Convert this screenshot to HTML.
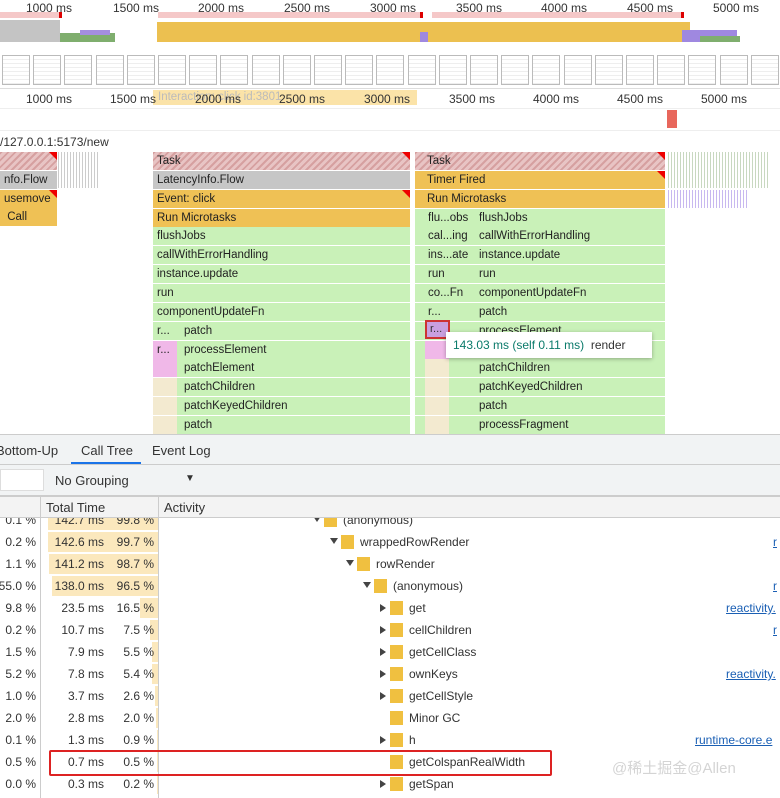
<!DOCTYPE html>
<html><head><meta charset="utf-8">
<style>
*{margin:0;padding:0;box-sizing:border-box}
body{width:780px;height:798px;overflow:hidden;background:#fff;font-family:"Liberation Sans",sans-serif;font-size:12px;color:#333;position:relative}
.a{position:absolute;white-space:nowrap}
.lab{font-size:12px;color:#333}
.fr{position:absolute;height:18px;line-height:18px;font-size:11.5px;color:#222;padding-left:4px;overflow:hidden;white-space:nowrap}
.g{background:#c9f1b8}
.y{background:#efc155}
.gr{background:#c6c6c6}
.t{background:repeating-linear-gradient(135deg,#d6a0a0 0 2px,#e8c4c4 2px 5px)}
.tri{position:absolute;width:0;height:0;border-top:8px solid #e00;border-left:8px solid transparent}
.row{position:absolute;left:0;width:780px;height:22px;line-height:22px;font-size:12px;white-space:nowrap}
.row span{white-space:nowrap}
.fo{position:absolute;width:13px;height:14px;background:#f0c040;top:4px}
.ar{position:absolute;top:7px;width:0;height:0}
.ar.d{border-left:4px solid transparent;border-right:4px solid transparent;border-top:6px solid #444}
.ar.r{border-top:4px solid transparent;border-bottom:4px solid transparent;border-left:6px solid #444}
.lk{position:absolute;color:#1a5fb4;text-decoration:underline}
</style></head><body>

<div class="a lab" style="left:26px;top:1px">1000 ms</div>
<div class="a lab" style="left:113px;top:1px">1500 ms</div>
<div class="a lab" style="left:198px;top:1px">2000 ms</div>
<div class="a lab" style="left:284px;top:1px">2500 ms</div>
<div class="a lab" style="left:370px;top:1px">3000 ms</div>
<div class="a lab" style="left:456px;top:1px">3500 ms</div>
<div class="a lab" style="left:541px;top:1px">4000 ms</div>
<div class="a lab" style="left:627px;top:1px">4500 ms</div>
<div class="a lab" style="left:713px;top:1px">5000 ms</div>
<div class="a" style="left:0;top:12px;width:62px;height:6px;background:#f5c8c8"></div>
<div class="a" style="left:59px;top:12px;width:3px;height:6px;background:#d00"></div>
<div class="a" style="left:158px;top:12px;width:265px;height:6px;background:#f5c8c8"></div>
<div class="a" style="left:420px;top:12px;width:3px;height:6px;background:#d00"></div>
<div class="a" style="left:432px;top:12px;width:252px;height:6px;background:#f5c8c8"></div>
<div class="a" style="left:681px;top:12px;width:3px;height:6px;background:#d00"></div>
<div class="a" style="left:0;top:20px;width:60px;height:22px;background:#c4c4c4"></div>
<div class="a" style="left:60px;top:33px;width:55px;height:9px;background:#7fae6e"></div>
<div class="a" style="left:80px;top:30px;width:30px;height:5px;background:#a48ee0"></div>
<div class="a" style="left:157px;top:22px;width:533px;height:20px;background:#ecc050"></div>
<div class="a" style="left:420px;top:32px;width:8px;height:10px;background:#9f88e0"></div>
<div class="a" style="left:682px;top:30px;width:55px;height:12px;background:#9f88e0"></div>
<div class="a" style="left:700px;top:36px;width:40px;height:6px;background:#7fae6e"></div>

<div class="a" style="left:0;top:52px;width:780px;height:36px" id="fs"></div>
<div class="a" style="left:0;top:88px;width:780px;height:1px;background:#ddd"></div>

<div class="a" style="left:153px;top:90px;width:264px;height:15px;background:#fbe3a8"></div>
<div class="a" style="left:158px;top:91px;font-size:11.5px;color:#bbb">Interaction: click id:3801</div>
<div class="a lab" style="left:26px;top:92px">1000 ms</div>
<div class="a lab" style="left:110px;top:92px">1500 ms</div>
<div class="a lab" style="left:195px;top:92px">2000 ms</div>
<div class="a lab" style="left:279px;top:92px">2500 ms</div>
<div class="a lab" style="left:364px;top:92px">3000 ms</div>
<div class="a lab" style="left:449px;top:92px">3500 ms</div>
<div class="a lab" style="left:533px;top:92px">4000 ms</div>
<div class="a lab" style="left:617px;top:92px">4500 ms</div>
<div class="a lab" style="left:701px;top:92px">5000 ms</div>
<div class="a" style="left:0;top:108px;width:780px;height:1px;background:#eee"></div>
<div class="a" style="left:667px;top:110px;width:10px;height:18px;background:#e8675c"></div>
<div class="a" style="left:0;top:130px;width:780px;height:1px;background:#eee"></div>
<div class="a" style="left:0;top:135px;font-size:12px;color:#333">/127.0.0.1:5173/new</div>

<div class="fr t" style="left:0;top:152px;width:57px"></div><div class="tri" style="left:49px;top:152px"></div>
<div class="fr gr" style="left:0;top:171px;width:57px">nfo.Flow</div>
<div class="fr y" style="left:0;top:190px;width:57px">usemove</div><div class="tri" style="left:49px;top:190px"></div>
<div class="fr y" style="left:0;top:208px;width:57px">&nbsp;Call</div>
<div class="a" style="left:58px;top:152px;width:42px;height:36px;background:repeating-linear-gradient(90deg,#ccc 0 1px,#fff 1px 3px)"></div>
<div class="a" style="left:668px;top:152px;width:100px;height:36px;background:repeating-linear-gradient(90deg,#c8d8c0 0 1px,#fff 1px 3px)"></div>
<div class="a" style="left:668px;top:190px;width:80px;height:18px;background:repeating-linear-gradient(90deg,#c8b8f0 0 1px,#fff 1px 3px)"></div>

<div id="fl"></div>
<div class="a" style="left:425px;top:320px;width:25px;height:19px;border:2px solid #c33;background:#c9a0e0;font-size:11px;line-height:15px;padding-left:3px">r...</div>
<div class="a" style="left:446px;top:332px;width:206px;height:26px;background:#fff;box-shadow:0 1px 4px rgba(0,0,0,.3);line-height:26px;padding-left:7px;font-size:12px"><span style="color:#0a7a6a">143.03 ms (self 0.11 ms)</span>&nbsp; render</div>

<div class="a" style="left:0;top:434px;width:780px;height:31px;background:#f1f3f4;border-top:1px solid #ccc;border-bottom:1px solid #ccc"></div>
<div class="a" style="left:-4px;top:443px;font-size:13px">Bottom-Up</div>
<div class="a" style="left:81px;top:443px;font-size:13px">Call Tree</div>
<div class="a" style="left:71px;top:462px;width:70px;height:2px;background:#1a73e8"></div>
<div class="a" style="left:152px;top:443px;font-size:13px">Event Log</div>
<div class="a" style="left:0;top:465px;width:780px;height:31px;background:#f1f3f4;border-bottom:1px solid #ccc"></div>
<div class="a" style="left:0;top:469px;width:44px;height:22px;background:#fff;border:1px solid #ddd"></div>
<div class="a" style="left:55px;top:473px;font-size:13px">No Grouping</div>
<div class="a" style="left:185px;top:473px;font-size:10px">▼</div>
<div class="a" style="left:40px;top:496px;width:1px;height:302px;background:#ccc"></div>
<div class="a" style="left:158px;top:496px;width:1px;height:302px;background:#ccc"></div>
<div id="tr"></div>
<div class="a" style="left:49px;top:750px;width:503px;height:26px;border:2px solid #d22;border-radius:2px"></div>
<div class="a" style="left:612px;top:757px;font-size:15px;color:#d4d4d4;font-family:'Liberation Sans','Noto Sans CJK SC',sans-serif">@稀土掘金@Allen</div>

<script>
var fs=document.getElementById('fs'),h='';
for(var i=0;i<25;i++){h+='<div style="position:absolute;left:'+(2+i*31.2)+'px;top:3px;width:28px;height:30px;border:1px solid #bbb;background:repeating-linear-gradient(0deg,#eee 0 1px,#fff 1px 4px)"></div>';}
fs.innerHTML=h;
var L=['Task','LatencyInfo.Flow','Event: click','Run Microtasks','flushJobs','callWithErrorHandling','instance.update','run','componentUpdateFn',null,null,null,null,null,null];
var LC=['t','gr','y','y','g','g','g','g','g','g','g','g','g','g','g'];
var R=['Task','Timer Fired','Run Microtasks','flushJobs','callWithErrorHandling','instance.update','run','componentUpdateFn','patch','processElement','','patchChildren','patchKeyedChildren','patch','processFragment'];
var RS=['','','','flu...obs','cal...ing','ins...ate','run','co...Fn','r...','','','','','',''];
var LR=['','','','','','','','','','patch','processElement','patchElement','patchChildren','patchKeyedChildren','patch'];
var f='';
for(var k=0;k<15;k++){var y=152+k*18.85;
 var lc=LC[k];
 f+='<div class="fr '+lc+'" style="left:153px;top:'+y+'px;width:257px">'+(L[k]||'')+'</div>';
 if(k>=9){var c=k==10||k==11?'#f0b8e8':(k>=12?'#f3ead0':'#c9f1b8');
  f+='<div class="fr" style="left:153px;top:'+y+'px;width:24px;background:'+c+'">'+(k<=10?'r...':'')+'</div>';
  f+='<div class="fr" style="left:180px;top:'+y+'px;width:200px">'+LR[k]+'</div>';}
 var rc=k==0?'t':(k<3?'y':'g');
 f+='<div class="fr '+rc+'" style="left:415px;top:'+y+'px;width:250px"></div>';
 if(k>=3){f+='<div class="fr" style="left:424px;top:'+y+'px;width:50px">'+RS[k]+'</div>';f+='<div class="fr" style="left:475px;top:'+y+'px;width:190px">'+R[k]+'</div>';}
 else f+='<div class="fr" style="left:423px;top:'+y+'px;width:200px">'+R[k]+'</div>';
 if(k>=10){f+='<div class="fr" style="left:425px;top:'+y+'px;width:24px;background:'+(k==10?'#f0b8e8':'#f3ead0')+'"></div>';}
}
f+='<div class="tri" style="left:402px;top:152px"></div><div class="tri" style="left:402px;top:190px"></div><div class="tri" style="left:657px;top:152px"></div><div class="tri" style="left:657px;top:171px"></div>';
document.getElementById('fl').innerHTML=f;
var T=[['0.1 %','142.7 ms','99.8 %',1,313,'(anonymous)','',''],
['0.2 %','142.6 ms','99.7 %',1,330,'wrappedRowRender','r',773],
['1.1 %','141.2 ms','98.7 %',1,346,'rowRender','',''],
['55.0 %','138.0 ms','96.5 %',1,363,'(anonymous)','r',773],
['9.8 %','23.5 ms','16.5 %',2,379,'get','reactivity.',726],
['0.2 %','10.7 ms','7.5 %',2,379,'cellChildren','r',773],
['1.5 %','7.9 ms','5.5 %',2,379,'getCellClass','',''],
['5.2 %','7.8 ms','5.4 %',2,379,'ownKeys','reactivity.',726],
['1.0 %','3.7 ms','2.6 %',2,379,'getCellStyle','',''],
['2.0 %','2.8 ms','2.0 %',0,379,'Minor GC','',''],
['0.1 %','1.3 ms','0.9 %',2,379,'h','runtime-core.e',695],
['0.5 %','0.7 ms','0.5 %',0,379,'getColspanRealWidth','',''],
['0.0 %','0.3 ms','0.2 %',2,379,'getSpan','','']];
var t='';
for(var i=0;i<T.length;i++){var r=T[i],y=509+i*22;var pc=parseFloat(r[2]);var bw=Math.max(1,pc*1.1);
 t+='<div class="row" style="top:'+y+'px">';
 t+='<div style="position:absolute;left:'+(158-bw)+'px;top:1px;width:'+bw+'px;height:20px;background:#fbe8bd"></div>';
 t+='<span style="position:absolute;right:744px">'+r[0]+'</span>';
 t+='<span style="position:absolute;right:676px">'+r[1]+'</span>';
 t+='<span style="position:absolute;right:626px">'+r[2]+'</span>';
 var x=r[4];
 if(r[3]==1)t+='<div class="ar d" style="left:'+x+'px"></div>';
 if(r[3]==2)t+='<div class="ar r" style="left:'+(x+1)+'px"></div>';
 t+='<div class="fo" style="left:'+(x+11)+'px"></div>';
 t+='<span style="position:absolute;left:'+(x+30)+'px">'+r[5]+'</span>';
 if(r[6])t+='<span class="lk" style="left:'+r[7]+'px">'+r[6]+'</span>';
 t+='</div>';}
document.getElementById('tr').innerHTML=t;
</script>
<div class="a" style="left:0;top:496px;width:780px;height:22px;background:#f3f3f3;border-top:1px solid #ccc;border-bottom:1px solid #ccc;z-index:2"></div>
<div class="a" style="left:46px;top:500px;font-size:13px;z-index:3">Total Time</div>
<div class="a" style="left:164px;top:500px;font-size:13px;z-index:3">Activity</div>
<div class="a" style="left:40px;top:497px;width:1px;height:21px;background:#ccc;z-index:3"></div>
<div class="a" style="left:158px;top:497px;width:1px;height:21px;background:#ccc;z-index:3"></div>
</body></html>
